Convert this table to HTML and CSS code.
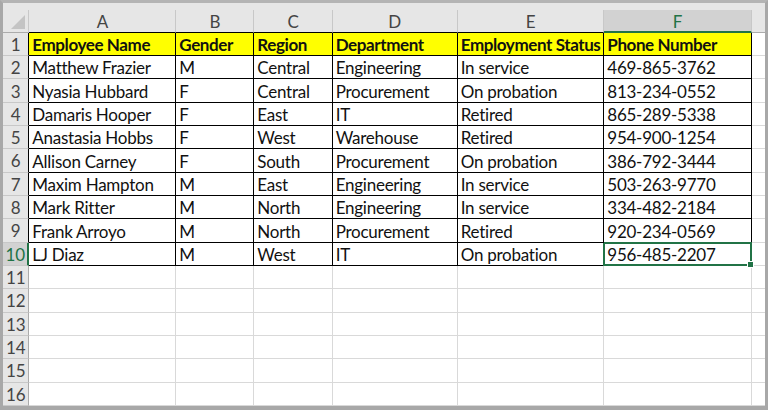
FILE: index.html
```html
<!DOCTYPE html>
<html>
<head>
<meta charset="utf-8">
<link rel="stylesheet" href="styles.css">
</head>
<body>
<div class="sheet">
  <div class="strip"></div>
  <div class="grid">
    <div class="corner"><span class="tri"></span></div>
    <div class="ch dk">A</div>
    <div class="ch dk">B</div>
    <div class="ch dk">C</div>
    <div class="ch dk">D</div>
    <div class="ch dk">E</div>
    <div class="ch sel">F</div>
    <div class="ch last"></div>

    <div class="rh dk">1</div>
    <div class="c d y b">Employee Name</div>
    <div class="c d y b">Gender</div>
    <div class="c d y b">Region</div>
    <div class="c d y b">Department</div>
    <div class="c d y b">Employment Status</div>
    <div class="c d y b">Phone Number</div>
    <div class="c g"></div>

    <div class="rh dk">2</div>
    <div class="c d">Matthew Frazier</div>
    <div class="c d">M</div>
    <div class="c d">Central</div>
    <div class="c d">Engineering</div>
    <div class="c d">In service</div>
    <div class="c d">469-865-3762</div>
    <div class="c g"></div>

    <div class="rh dk">3</div>
    <div class="c d">Nyasia Hubbard</div>
    <div class="c d">F</div>
    <div class="c d">Central</div>
    <div class="c d">Procurement</div>
    <div class="c d">On probation</div>
    <div class="c d">813-234-0552</div>
    <div class="c g"></div>

    <div class="rh dk">4</div>
    <div class="c d">Damaris Hooper</div>
    <div class="c d">F</div>
    <div class="c d">East</div>
    <div class="c d">IT</div>
    <div class="c d">Retired</div>
    <div class="c d">865-289-5338</div>
    <div class="c g"></div>

    <div class="rh dk">5</div>
    <div class="c d">Anastasia Hobbs</div>
    <div class="c d">F</div>
    <div class="c d">West</div>
    <div class="c d">Warehouse</div>
    <div class="c d">Retired</div>
    <div class="c d">954-900-1254</div>
    <div class="c g"></div>

    <div class="rh dk">6</div>
    <div class="c d">Allison Carney</div>
    <div class="c d">F</div>
    <div class="c d">South</div>
    <div class="c d">Procurement</div>
    <div class="c d">On probation</div>
    <div class="c d">386-792-3444</div>
    <div class="c g"></div>

    <div class="rh dk">7</div>
    <div class="c d">Maxim Hampton</div>
    <div class="c d">M</div>
    <div class="c d">East</div>
    <div class="c d">Engineering</div>
    <div class="c d">In service</div>
    <div class="c d">503-263-9770</div>
    <div class="c g"></div>

    <div class="rh dk">8</div>
    <div class="c d">Mark Ritter</div>
    <div class="c d">M</div>
    <div class="c d">North</div>
    <div class="c d">Engineering</div>
    <div class="c d">In service</div>
    <div class="c d">334-482-2184</div>
    <div class="c g"></div>

    <div class="rh dk">9</div>
    <div class="c d">Frank Arroyo</div>
    <div class="c d">M</div>
    <div class="c d">North</div>
    <div class="c d">Procurement</div>
    <div class="c d">Retired</div>
    <div class="c d">920-234-0569</div>
    <div class="c g"></div>

    <div class="rh sel">10</div>
    <div class="c d">LJ Diaz</div>
    <div class="c d">M</div>
    <div class="c d">West</div>
    <div class="c d">IT</div>
    <div class="c d">On probation</div>
    <div class="c d active">956-485-2207<span class="handle"></span></div>
    <div class="c g"></div>

    <div class="rh">11</div><div class="c"></div><div class="c"></div><div class="c"></div><div class="c"></div><div class="c"></div><div class="c"></div><div class="c g"></div>
    <div class="rh">12</div><div class="c"></div><div class="c"></div><div class="c"></div><div class="c"></div><div class="c"></div><div class="c"></div><div class="c g"></div>
    <div class="rh">13</div><div class="c"></div><div class="c"></div><div class="c"></div><div class="c"></div><div class="c"></div><div class="c"></div><div class="c g"></div>
    <div class="rh">14</div><div class="c"></div><div class="c"></div><div class="c"></div><div class="c"></div><div class="c"></div><div class="c"></div><div class="c g"></div>
    <div class="rh">15</div><div class="c"></div><div class="c"></div><div class="c"></div><div class="c"></div><div class="c"></div><div class="c"></div><div class="c g"></div>
    <div class="rh">16</div><div class="c"></div><div class="c"></div><div class="c"></div><div class="c"></div><div class="c"></div><div class="c"></div><div class="c g"></div>
  </div>
</div>
</body>
</html>
```

FILE: styles.css
```css
html, body {
  margin: 0;
  padding: 0;
  background: #ffffff;
}

.sheet {
  width: 768px;
  height: 410px;
  box-sizing: border-box;
  border-top: 3px solid #b4b4b4;
  border-left: 3px solid #a8a8a8;
  border-right: 3px solid #a8a8a8;
  border-bottom: 4px solid #a8a8a8;
  background: #ffffff;
  overflow: hidden;
  font-family: Lato, "Liberation Sans", sans-serif;
  font-size: 17px;
  letter-spacing: -0.25px;
  color: #111111;
}

.strip {
  height: 7px;
  background: #e6e6e6;
}

.grid {
  display: grid;
  grid-template-columns: 26.3px 147px 78px 78.4px 125px 146.6px 147.4px 1fr;
  grid-template-rows: 22.7px repeat(16, 23.33px);
}

.corner {
  background: #e6e6e6;
  border-right: 1px solid #c8c8c8;
  border-bottom: 1px solid #ababab;
  position: relative;
  box-sizing: border-box;
}

.tri {
  position: absolute;
  right: 3px;
  bottom: 3px;
  width: 0;
  height: 0;
  border-left: 14px solid transparent;
  border-bottom: 14px solid #c4c4c4;
}

.ch {
  background: #e6e6e6;
  border-right: 1px solid #c8c8c8;
  border-bottom: 1px solid #ababab;
  box-sizing: border-box;
  display: flex;
  align-items: center;
  justify-content: center;
  padding-top: 2px;
  color: #444444;
}

.ch.dk {
  border-bottom-color: #000000;
}

.ch.sel {
  background: #d2d2d2;
  border-bottom: 2px solid #217346;
  color: #217346;
}

.ch.last {
  border-right: none;
}

.rh {
  background: #e6e6e6;
  border-right: 1px solid #ababab;
  border-bottom: 1px solid #c8c8c8;
  box-sizing: border-box;
  display: flex;
  align-items: center;
  justify-content: center;
  padding-top: 1px;
  color: #444444;
}

.rh.dk {
  border-right-color: #000000;
}

.rh.sel {
  background: #d2d2d2;
  border-right: 2px solid #217346;
  color: #217346;
}

.c {
  border-right: 1px solid #d9d9d9;
  border-bottom: 1px solid #d9d9d9;
  box-sizing: border-box;
  display: flex;
  align-items: flex-end;
  padding: 0 3px 0 3px;
  white-space: nowrap;
  overflow: visible;
  line-height: 21px;
}

.c.g {
  border-right: none;
}

.c.d {
  border-right-color: #000000;
  border-bottom-color: #000000;
}

.c.y {
  background: #ffff00;
}

.c.b {
  font-weight: bold;
  letter-spacing: -0.4px;
}

.c.active {
  position: relative;
  box-shadow: inset 0 0 0 1px #217346, -1px 0 0 0 #217346, 0 -1px 0 0 #217346;
  border-right-color: #217346;
  border-bottom-color: #217346;
}

.handle {
  position: absolute;
  right: -3px;
  bottom: -3px;
  width: 5px;
  height: 5px;
  background: #217346;
  border: 1px solid #ffffff;
  box-sizing: content-box;
}
```
